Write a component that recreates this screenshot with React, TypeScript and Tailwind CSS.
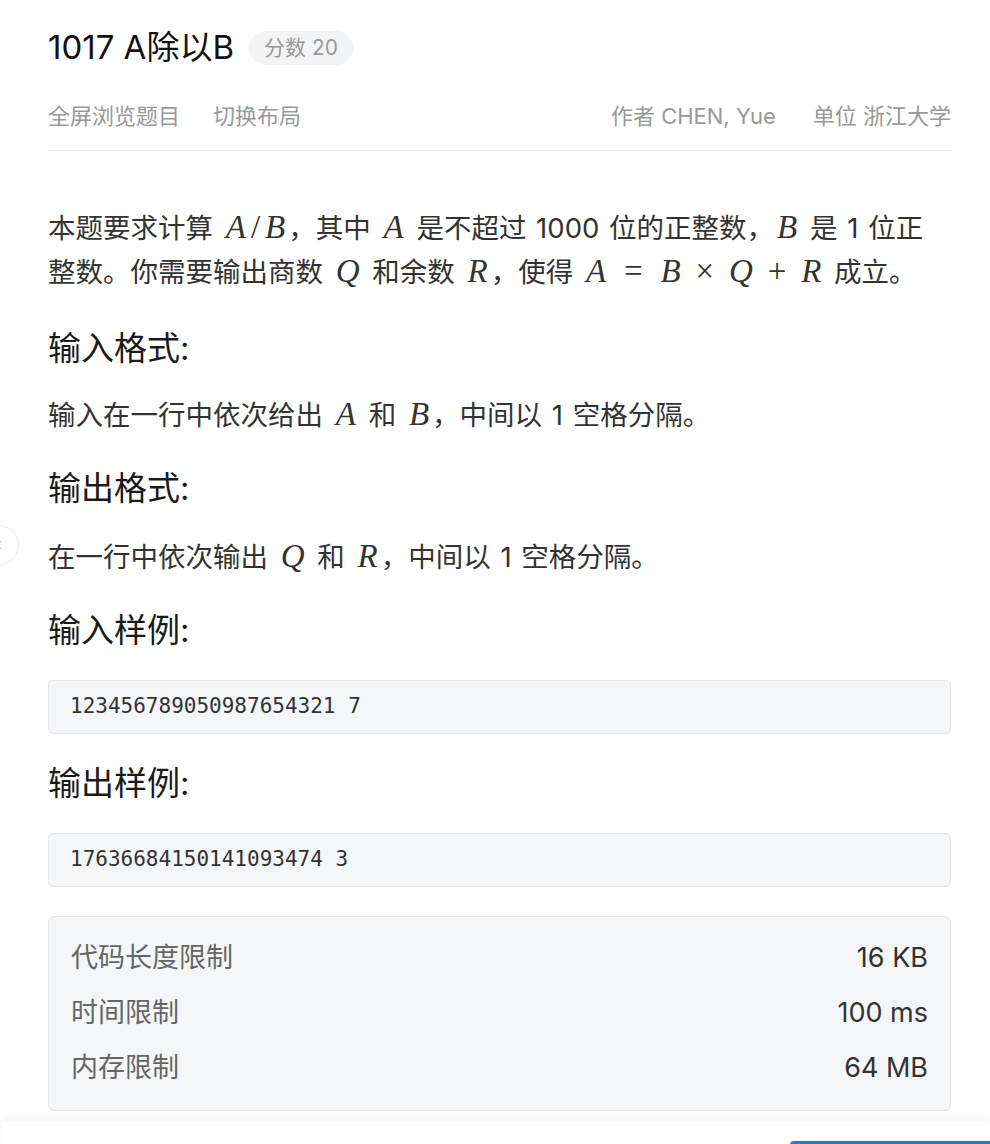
import React from "react";
import { ChevronLeft } from "lucide-react";

const M = ({ children }: { children: React.ReactNode }) => (
  <span className="italic text-[1.2em] leading-none px-[3px]" style={{ fontFamily: '"Liberation Serif", serif' }}>
    {children}
  </span>
);

const Op = ({ children, w }: { children: React.ReactNode; w: string }) => (
  <span className={`not-italic text-[1.2em] leading-none ${w}`} style={{ fontFamily: '"Liberation Serif", serif' }}>
    {children}
  </span>
);

function Heading({ children, className }: { children: React.ReactNode; className: string }) {
  return <h2 className={`text-[33px] leading-[44px] font-normal text-[#1a1a1a] ${className}`}>{children}</h2>;
}

function Code({ children }: { children: React.ReactNode }) {
  return (
    <div className="mt-[28px] h-[54px] flex items-center rounded-[5px] border border-[#e5e6e8] bg-[#f5f6f8] px-[21px]">
      <span className="text-[21px] text-[#333]" style={{ fontFamily: '"DejaVu Sans Mono", monospace' }}>
        {children}
      </span>
    </div>
  );
}

export default function App() {
  return (
    <div
      className="relative h-[1144px] w-[990px] overflow-hidden bg-white"
      style={{ fontFamily: 'Inter, "Noto Sans CJK SC", sans-serif' }}
    >
      <div className="pl-[48px] pr-[39px]">
        <div className="mt-[31px] flex h-[34px] items-center">
          <h1 className="text-[33px] font-normal text-[#111]">1017 A除以B</h1>
          <span className="ml-[15px] flex h-[34px] items-center rounded-full bg-[#f3f4f6] px-[15px] text-[21px] text-[#999]">
            分数 20
          </span>
        </div>
        <div className="mt-[36px] flex h-[30px] items-center text-[22px] text-[#999]">
          <span>全屏浏览题目</span>
          <span className="ml-[33px]">切换布局</span>
          <span className="ml-auto">作者 CHEN, Yue</span>
          <span className="ml-[37px]">单位 浙江大学</span>
        </div>
        <div className="mt-[19px] h-px bg-[#eeeeee]" />

        <p className="mt-[55px] text-[27.5px] leading-[44px] text-[#333] [word-spacing:2px]">
          本题要求计算 <M>A</M>
          <Op w="mx-[2px]">/</Op>
          <M>B</M>，其中 <M>A</M> 是不超过 1000 位的正整数，<M>B</M> 是 1 位正
          <br />
          整数。你需要输出商数 <M>Q</M> 和余数 <M>R</M>，使得 <M>A</M>
          <Op w="mx-[0.45em]">=</Op>
          <M>B</M>
          <Op w="mx-[0.36em]">×</Op>
          <M>Q</M>
          <Op w="mx-[0.36em]">+</Op>
          <M>R</M> 成立。
        </p>

        <Heading className="mt-[32px]">输入格式:</Heading>
        <p className="mt-[23px] text-[27.5px] leading-[44px] text-[#333] [word-spacing:2px]">
          输入在一行中依次给出 <M>A</M> 和 <M>B</M>，中间以 1 空格分隔。
        </p>

        <Heading className="mt-[29px]">输出格式:</Heading>
        <p className="mt-[25px] text-[27.5px] leading-[44px] text-[#333] [word-spacing:2px]">
          在一行中依次输出 <M>Q</M> 和 <M>R</M>，中间以 1 空格分隔。
        </p>

        <Heading className="mt-[29px]">输入样例:</Heading>
        <Code>123456789050987654321 7</Code>

        <Heading className="mt-[27px]">输出样例:</Heading>
        <Code>17636684150141093474 3</Code>

        <div className="mt-[29px] rounded-[6px] border border-[#e5e6e8] bg-[#f5f6f8] px-[22px] py-[14px] text-[27px]">
          <div className="flex h-[55px] items-center justify-between">
            <span className="text-[#666]">代码长度限制</span>
            <span className="text-[#333]">16 KB</span>
          </div>
          <div className="flex h-[55px] items-center justify-between">
            <span className="text-[#666]">时间限制</span>
            <span className="text-[#333]">100 ms</span>
          </div>
          <div className="flex h-[55px] items-center justify-between">
            <span className="text-[#666]">内存限制</span>
            <span className="text-[#333]">64 MB</span>
          </div>
        </div>
      </div>

      <div className="mt-[10px] ml-[2px] h-[80px] bg-white shadow-[0_-3px_6px_rgba(0,0,0,0.04)]">
        <div className="flex justify-end pt-[20px]">
          <div className="h-[40px] w-[200px] rounded-tl-[4px] bg-[#2f72d6]" />
        </div>
      </div>

      <div className="absolute left-[-21px] top-[525px] flex h-[40px] w-[40px] items-center justify-center rounded-full border border-[#e8e8e8] bg-white">
        <ChevronLeft size={14} className="text-[#999]" strokeWidth={1.5} />
      </div>
    </div>
  );
}
